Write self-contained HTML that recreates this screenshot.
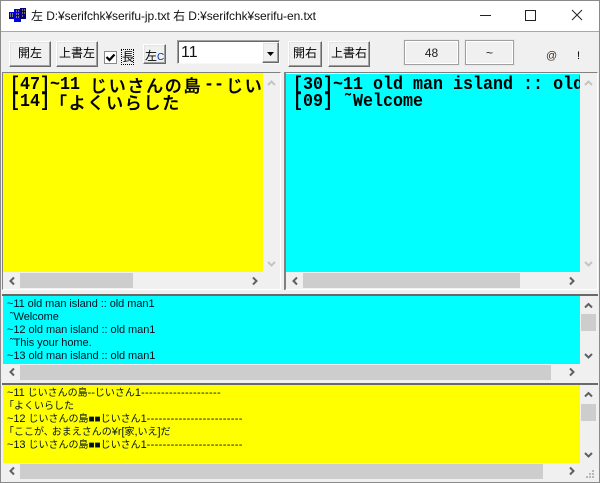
<!DOCTYPE html>
<html><head><meta charset="utf-8">
<style>
html,body{margin:0;padding:0;width:600px;height:483px;overflow:hidden;background:#f0f0f0}
div,svg{position:absolute;box-sizing:border-box}
body{font-family:"Liberation Sans","Noto Sans CJK JP",sans-serif;color:#000}
.btn{background:#f0f0f0;border:1px solid;border-color:#fff #696969 #696969 #fff;box-shadow:inset -1px -1px 0 #a0a0a0,inset 1px 1px 0 #e3e3e3;font-size:12px;text-align:center;line-height:23px;white-space:nowrap}
.st{border:1px solid #a0a0a0;box-shadow:inset -1px -1px 0 #fff,inset 1px 1px 0 #fff,0 0 0 1px #e8e8e8;background:#f0f0f0;font-size:12px;text-align:center;color:#222}
.big{font-family:"Liberation Mono",monospace;font-size:18px;line-height:17px;height:17px;white-space:pre;font-weight:bold;transform:scaleX(.926);transform-origin:0 0}
.bc{font-family:"Noto Sans CJK JP",sans-serif;font-size:17px;letter-spacing:1.7px;line-height:17px;height:17px;white-space:pre;font-weight:500;-webkit-text-stroke:.3px #000}
.sm{font-size:11px;line-height:13px;height:13px;white-space:pre;letter-spacing:-.06px;color:#012}
.sm .c{font-size:10px;letter-spacing:0;line-height:13px}
.sm .d{letter-spacing:.34px}
.thumb{background:#cdcdcd}
.ar{fill:none;stroke:#606060;stroke-width:2}
.ard{fill:none;stroke:#c4c4c4;stroke-width:2}
</style></head>
<body>
<div style="left:0;top:0;width:600px;height:32px;background:#fff"></div>
<div style="left:0;top:31px;width:600px;height:1px;background:#a8a8a8"></div>
<div style="left:0;top:0;width:1px;height:483px;background:#8a8a8a"></div>
<div style="left:599px;top:0;width:1px;height:483px;background:#8a8a8a"></div>
<div style="left:0;top:482px;width:600px;height:1px;background:#8a8a8a"></div>
<div style="left:0;top:0;width:600px;height:1px;background:#8a8a8a"></div>

<svg style="left:9px;top:8px" width="17" height="14" viewBox="0 0 17 14">
<rect x="0" y="4" width="6" height="7" fill="#0000c0"/><rect x="5" y="1" width="7" height="13" fill="#0000e0"/><rect x="11" y="0" width="6" height="11" fill="#000080"/>
<path d="M1 6h1M3 6h1M1 8h1M3 8h1M7 3h1M9 3h1M7 6h1M9 6h1M7 9h1M9 9h1M13 2h1M15 2h1M13 5h1M15 5h1M13 8h1" stroke="#ffe040" stroke-width="1"/>
</svg>
<div style="left:31px;top:9px;font-size:12px;line-height:15px;white-space:nowrap;color:#111;letter-spacing:-.07px">左 D:¥serifchk¥serifu-jp.txt 右 D:¥serifchk¥serifu-en.txt</div>

<svg style="left:480px;top:6px" width="120" height="20" viewBox="0 0 120 20">
<path d="M0 9.500h11" stroke="#222" stroke-width="1" fill="none"/>
<rect x="45.500" y="4.500" width="10" height="10" fill="none" stroke="#222"/>
<path d="M92 4l10 10M102 4l-10 10" stroke="#222" stroke-width="1" fill="none"/>
</svg>

<!-- toolbar -->
<div class="btn" style="left:9px;top:41px;width:42px;height:26px">開左</div>
<div class="btn" style="left:56px;top:41px;width:42px;height:26px">上書左</div>
<div style="left:104px;top:51px;width:13px;height:13px;background:#fff;border:1px solid #8a8a8a"></div>
<svg style="left:105px;top:52px" width="11" height="11" viewBox="0 0 11 11"><path d="M1.500 5l3 3L9.500 2.500" fill="none" stroke="#000" stroke-width="2.200"/></svg>
<div style="left:121px;top:49px;width:13px;height:16px;border:1px dotted #000;font-size:12px;line-height:14px;text-align:center;overflow:hidden">長</div>
<div class="btn" style="left:143px;top:44px;width:23px;height:20px;line-height:22px;text-align:left;overflow:hidden;padding-left:1px;font-size:12px">左<span style="color:#00309c;font-size:10px">C</span></div>
<div style="left:177px;top:40px;width:103px;height:24px;background:#fff;border:1px solid;border-color:#a0a0a0 #f8f8f8 #f8f8f8 #a0a0a0;box-shadow:inset 1px 1px 0 #696969"></div>
<div style="left:181px;top:43px;font-size:16px;line-height:20px;color:#111">11</div>
<div class="btn" style="left:262px;top:42px;width:17px;height:21px"></div>
<svg style="left:266px;top:51px" width="10" height="6"><path d="M1 1h7l-3.500 4z" fill="#000"/></svg>
<div class="btn" style="left:288px;top:41px;width:34px;height:26px">開右</div>
<div class="btn" style="left:328px;top:41px;width:42px;height:26px">上書右</div>
<div class="st" style="left:404px;top:40px;width:55px;height:25px;line-height:24px">48</div>
<div class="st" style="left:465px;top:40px;width:49px;height:25px;line-height:24px">~</div>
<div style="left:546px;top:49px;font-size:11px;line-height:14px;color:#432">@</div>
<div style="left:577px;top:49px;font-size:11px;line-height:14px">!</div>

<!-- top left pane -->
<div style="left:2px;top:72px;width:279px;height:218px;border:1px solid;border-color:#808080 #fff #fff #808080"></div>
<div style="left:3px;top:73px;width:260px;height:199px;background:#ff0;overflow:hidden">
<div class="big" style="left:7px;top:4px">[47]~11</div>
<div class="bc" style="left:87px;top:3px">じいさんの島</div>
<div class="big" style="left:201px;top:4px">--</div>
<div class="bc" style="left:223px;top:3px">じいさん</div>
<div class="big" style="left:7px;top:21px">[14]</div>
<div class="bc" style="left:47px;top:20px">「よくいらした</div></div>
<svg style="left:263px;top:73px" width="17" height="199"><path class="ard" d="M5 12l3.500-3.500 3.500 3.500M5 189l3.500 3.500 3.500-3.500"/></svg>
<div class="thumb" style="left:20px;top:273px;width:113px;height:15px"></div>
<svg style="left:3px;top:272px" width="260" height="17"><path class="ar" d="M11 5.500l-3.500 3.500 3.500 3.500M250 5.500l3.500 3.500-3.500 3.500"/></svg>

<!-- top right pane -->
<div style="left:285px;top:72px;width:313px;height:218px;border:1px solid;border-color:#808080 #fff #fff #808080"></div>
<div style="left:284px;top:72px;width:1px;height:218px;background:#808080"></div>
<div style="left:286px;top:74px;width:294px;height:198px;background:#0ff;overflow:hidden">
<div class="big" style="left:7px;top:3px">[30]~11 old man island :: old man1</div>
<div class="big" style="left:7px;top:20px">[09] ˜Welcome</div></div>
<svg style="left:580px;top:73px" width="17" height="199"><path class="ard" d="M5 12l3.500-3.500 3.500 3.500M5 189l3.500 3.500 3.500-3.500"/></svg>
<div class="thumb" style="left:303px;top:273px;width:217px;height:15px"></div>
<svg style="left:286px;top:272px" width="294" height="17"><path class="ar" d="M11 5.500l-3.500 3.500 3.500 3.500M284 5.500l3.500 3.500-3.500 3.500"/></svg>

<!-- separators -->
<div style="left:2px;top:294px;width:596px;height:2px;background:#696969"></div>

<!-- lower cyan -->
<div style="left:3px;top:296px;width:577px;height:68px;background:#0ff;overflow:hidden">
<div class="sm" style="left:4px;top:2px">~11 old man island :: old man1</div>
<div class="sm" style="left:4px;top:15px"> ˜Welcome</div>
<div class="sm" style="left:4px;top:28px">~12 old man island :: old man1</div>
<div class="sm" style="left:4px;top:41px"> ˜This your home.</div>
<div class="sm" style="left:4px;top:54px">~13 old man island :: old man1</div></div>
<div class="thumb" style="left:581px;top:314px;width:15px;height:17px"></div>
<svg style="left:580px;top:296px" width="17" height="68"><path class="ar" d="M5 11.500l3.500-3.500 3.500 3.500M5 58l3.500 3.500 3.500-3.500"/></svg>
<div class="thumb" style="left:20px;top:365px;width:531px;height:15px"></div>
<svg style="left:3px;top:365px" width="577" height="16"><path class="ar" d="M11 3.500l-3.500 3.500 3.500 3.500M567 3.500l3.500 3.500-3.500 3.500"/></svg>

<!-- lower yellow -->
<div style="left:2px;top:383px;width:596px;height:2px;background:#696969"></div>
<div style="left:3px;top:385px;width:577px;height:78px;background:#ff0;overflow:hidden">
<div class="sm" style="left:4px;top:2px">~11 <span class="c">じいさんの島</span>--<span class="c">じいさん</span>1<span class="d">--------------------</span></div>
<div class="sm" style="left:1px;top:15px"><span class="c">「よくいらした</span></div>
<div class="sm" style="left:4px;top:28px">~12 <span class="c">じいさんの島■■じいさん</span>1<span class="d">------------------------</span></div>
<div class="sm" style="left:1px;top:41px"><span class="c">「ここが､ おまえさんの</span>¥r[<span class="c">家</span>,<span class="c">いえ</span>]<span class="c">だ</span></div>
<div class="sm" style="left:4px;top:54px">~13 <span class="c">じいさんの島■■じいさん</span>1<span class="d">------------------------</span></div></div>
<div class="thumb" style="left:581px;top:404px;width:15px;height:17px"></div>
<svg style="left:580px;top:385px" width="17" height="78"><path class="ar" d="M5 11.500l3.500-3.500 3.500 3.500M5 68l3.500 3.500 3.500-3.500"/></svg>
<div class="thumb" style="left:20px;top:464px;width:523px;height:15px"></div>
<svg style="left:3px;top:464px" width="577" height="16"><path class="ar" d="M11 3.500l-3.500 3.500 3.500 3.500M567 3.500l3.500 3.500-3.500 3.500"/></svg>
<svg style="left:585px;top:469px" width="12" height="12"><path d="M7 1h2v2H7zM4 4h2v2H4zM7 4h2v2H7zM1 7h2v2H1zM4 7h2v2H4zM7 7h2v2H7z" fill="#b8b8b8"/></svg>
</body></html>
